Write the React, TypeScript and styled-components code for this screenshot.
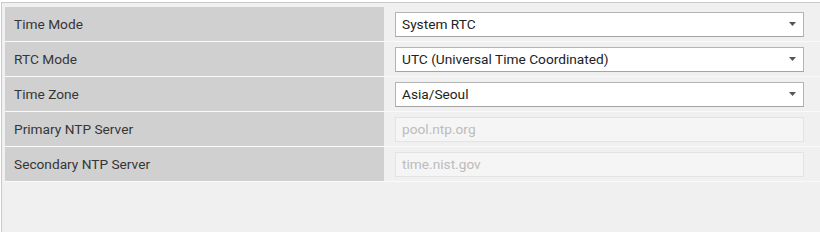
import React from "react";
import styled, { createGlobalStyle } from "styled-components";

const GlobalStyle = createGlobalStyle`
    html, body {
        margin: 0;
        padding: 0;
        background: #ffffff;
        font-family: Roboto, "Liberation Sans", Arial, sans-serif;
    }
`;

// Panel that holds the settings table
const Panel = styled.div`
    margin: 2px 0 0 1px;
    height: 230px;
    box-sizing: border-box;
    border-top: 1px solid #c9c9c9;
    border-left: 1px solid #c9c9c9;
    background: #f0f0f0;
    padding: 4px 0 0 3px;
`;

const Table = styled.div`
    display: flex;
    flex-direction: column;
`;

const Row = styled.div`
    display: grid;
    grid-template-columns: 379px 1fr;
    height: 35px;
    box-sizing: border-box;
    border-bottom: 1px solid #fafafa;
`;

const Label = styled.div`
    display: flex;
    align-items: center;
    padding-left: 9px;
    background: #d0d0d0;
    color: #363636;
    font-size: 13.7px;
`;

const Value = styled.div`
    display: flex;
    align-items: center;
    padding: 0 16px 0 11px;
`;

const SelectBox = styled.div`
    flex: 1;
    height: 25px;
    box-sizing: border-box;
    display: flex;
    align-items: center;
    justify-content: space-between;
    padding: 0 7px 0 6px;
    background: #ffffff;
    border: 1px solid #b4b4b4;
    border-bottom-color: #a4a4a4;
    color: #222222;
    font-size: 13.7px;
`;

const Caret = styled.svg`
    width: 7px;
    height: 4px;
    fill: #555555;
`;

const TextInput = styled.input`
    flex: 1;
    height: 25px;
    box-sizing: border-box;
    margin: 0;
    padding: 0 6px;
    background: #f5f5f5;
    border: 1px solid #e3e3e3;
    color: #bcbcbc;
    font-family: inherit;
    font-size: 13.7px;
    outline: none;
    -webkit-text-fill-color: #bcbcbc;
`;

type Field = { label: string; kind: "select" | "input"; value: string };

const fields: Field[] = [
    { label: "Time Mode", kind: "select", value: "System RTC" },
    { label: "RTC Mode", kind: "select", value: "UTC (Universal Time Coordinated)" },
    { label: "Time Zone", kind: "select", value: "Asia/Seoul" },
    { label: "Primary NTP Server", kind: "input", value: "pool.ntp.org" },
    { label: "Secondary NTP Server", kind: "input", value: "time.nist.gov" },
];

export default function App() {
    return (
        <>
            <GlobalStyle />
            <Panel>
                <Table>
                    {fields.map((f) => (
                        <Row key={f.label}>
                            <Label>{f.label}</Label>
                            <Value>
                                {f.kind === "select" ? (
                                    <SelectBox>
                                        <span>{f.value}</span>
                                        <Caret viewBox="0 0 7 4">
                                            <polygon points="0,0 7,0 3.5,4" />
                                        </Caret>
                                    </SelectBox>
                                ) : (
                                    <TextInput value={f.value} disabled readOnly />
                                )}
                            </Value>
                        </Row>
                    ))}
                </Table>
            </Panel>
        </>
    );
}
